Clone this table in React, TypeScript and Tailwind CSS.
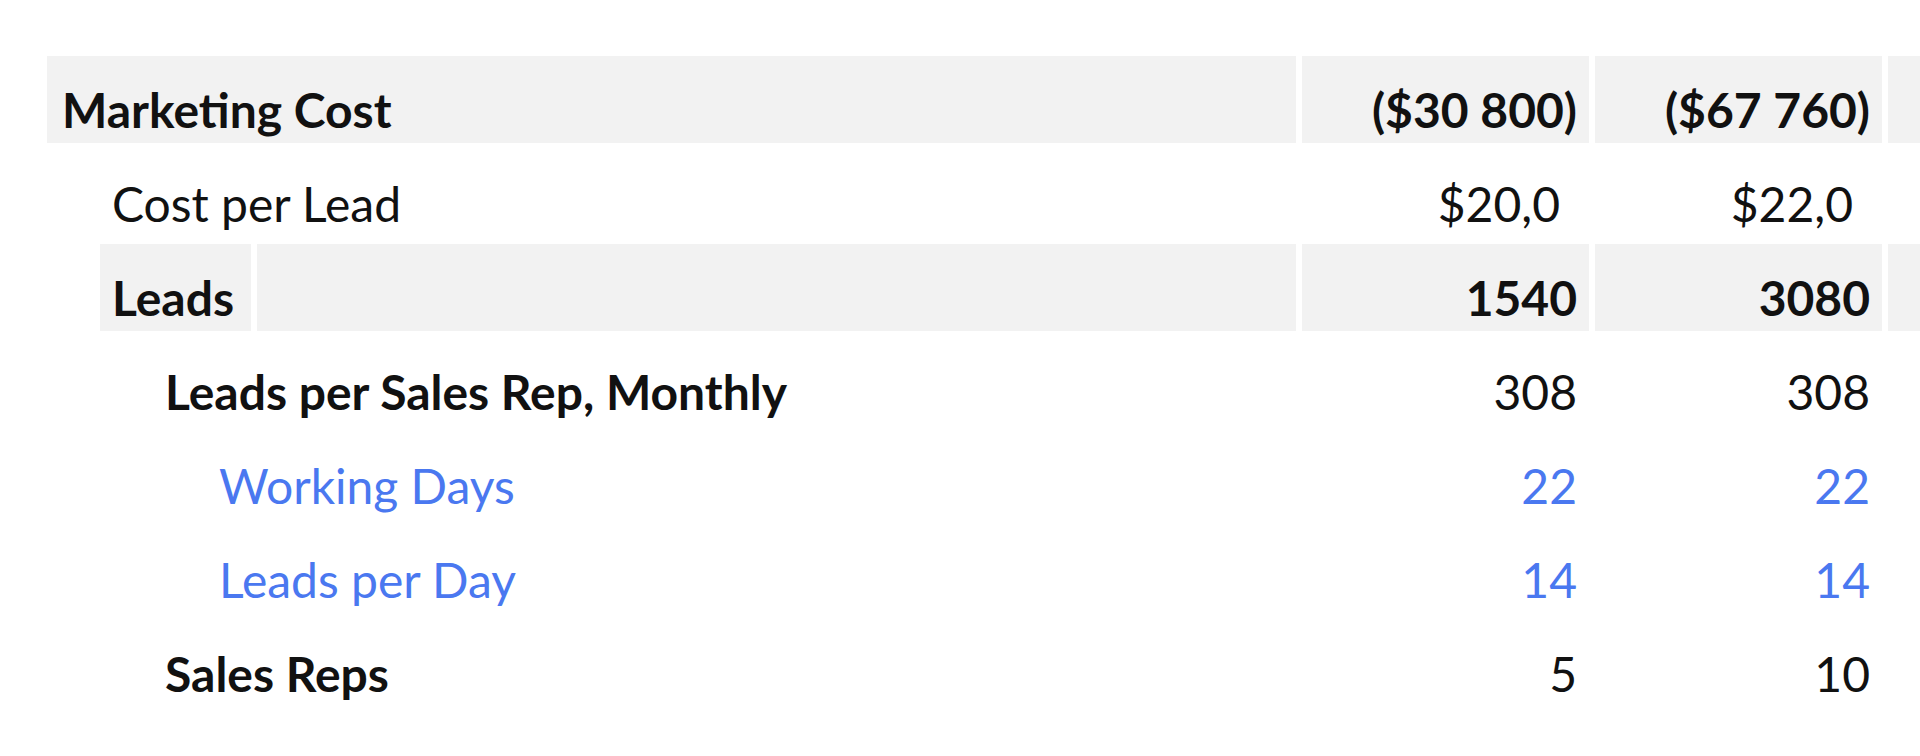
import React from 'react';

type Row = {
  label: string;
  level: number;
  bold?: boolean;
  boldValues?: boolean;
  blue?: boolean;
  band?: 'full' | 'split';
  values: string[];
  valuePad?: string;
};

const rows: Row[] = [
  { label: 'Marketing Cost', level: 0, bold: true, boldValues: true, band: 'full', values: ['($30 800)', '($67 760)'] },
  { label: 'Cost per Lead', level: 1, values: ['$20,0', '$22,0'], valuePad: 'pr-[29px]' },
  { label: 'Leads', level: 1, bold: true, boldValues: true, band: 'split', values: ['1540', '3080'] },
  { label: 'Leads per Sales Rep, Monthly', level: 2, bold: true, values: ['308', '308'] },
  { label: 'Working Days', level: 3, blue: true, values: ['22', '22'] },
  { label: 'Leads per Day', level: 3, blue: true, values: ['14', '14'] },
  { label: 'Sales Reps', level: 2, bold: true, values: ['5', '10'] },
];

const indent = ['pl-[15px]', 'pl-[65px]', 'pl-[118px]', 'pl-[172px]'];

const App = () => {
  return (
    <div
      className="w-[1920px] h-[756px] bg-white overflow-hidden pt-[56px] pl-[47px]"
      style={{ fontFamily: 'Lato, "Open Sans", sans-serif' }}
    >
      <div className="grid grid-cols-[47px_151px_1039px_287px_287px_40px] gap-x-[6px] gap-y-[7px] text-[48px] leading-none">
        {rows.map((row, i) => {
          const tone = row.blue ? 'text-[#4a78f0]' : 'text-[#111]';
          const weight = row.bold ? 'font-bold' : 'font-normal';
          const valueWeight = row.boldValues ? 'font-bold' : 'font-normal';
          const bg = row.band ? 'bg-[#f2f2f2]' : '';
          const pad = row.valuePad ?? 'pr-[12px]';
          return (
            <React.Fragment key={i}>
              {row.band === 'split' ? (
                <>
                  <div className="h-[87px]" />
                  <div className={`h-[87px] flex items-end pb-[9px] pl-[12px] ${bg} ${tone} ${weight}`}>
                    {row.label}
                  </div>
                  <div className={`h-[87px] ${bg}`} />
                </>
              ) : (
                <div
                  className={`col-span-3 h-[87px] flex items-end pb-[9px] whitespace-nowrap ${indent[row.level]} ${bg} ${tone} ${weight}`}
                >
                  {row.label}
                </div>
              )}
              {row.values.map((v, j) => (
                <div
                  key={j}
                  className={`h-[87px] flex items-end justify-end pb-[9px] ${pad} ${bg} ${tone} ${valueWeight}`}
                >
                  {v}
                </div>
              ))}
              <div className={`h-[87px] ${bg}`} />
            </React.Fragment>
          );
        })}
      </div>
    </div>
  );
};

export default App;
